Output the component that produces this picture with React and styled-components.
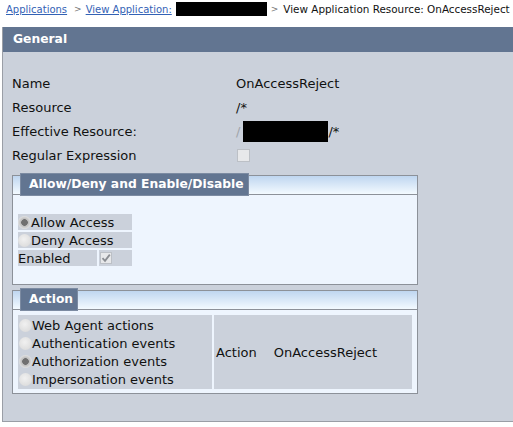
import React from 'react'
import styled, { createGlobalStyle } from 'styled-components'

const GlobalStyle = createGlobalStyle`
  html, body {
    margin: 0;
    padding: 0;
    background: #fff;
    overflow: hidden;
  }

  body {
    font-family: "DejaVu Sans", Verdana, sans-serif;
    color: #111;
  }
`

const Crumbs = styled.div`
  display: flex;
  align-items: center;
  height: 18px;
  padding-left: 6px;
  font-size: 10px;
  white-space: nowrap;
`

const CrumbLink = styled.a`
  flex: none;
  color: #3362b5;
  text-decoration: underline;
`

const CrumbCurrent = styled.span`
  flex: none;
  font-size: 10.4px;
`

const Sep = styled.span`
  flex: none;
  color: #777;
  font-size: 9px;
  margin: 0 ${({ r }) => r}px 0 ${({ l }) => l}px;
`

const Redacted = styled.span`
  display: inline-block;
  flex: none;
  width: ${({ w }) => w}px;
  height: ${({ h }) => h}px;
  background: #000;
  margin-left: ${({ ml }) => ml || 0}px;
`

const Panel = styled.section`
  margin: 9px 0 0 2px;
  border-left: 1px solid #9a9ea6;
  border-bottom: 1px solid #9a9ea6;
  background: #cbd1db;
  padding-bottom: 27px;
`

const PanelHeader = styled.h2`
  margin: 0;
  height: 25px;
  line-height: 25px;
  padding-left: 10px;
  background: #627591;
  color: #fff;
  font-size: 12.3px;
  font-weight: bold;
`

const Fields = styled.div`
  padding: 19px 0 0 9px;
`

const FieldRow = styled.div`
  display: grid;
  grid-template-columns: 224px 1fr;
  align-items: center;
  height: 24px;
  font-size: 13px;
`

const Muted = styled.span`
  color: #a0a4aa;
`

const Value = styled.span`
  display: flex;
  align-items: center;
`

const Check = styled.span`
  display: inline-flex;
  align-items: center;
  justify-content: center;
  box-sizing: border-box;
  width: ${({ size }) => size}px;
  height: ${({ size }) => size}px;
  background: #e7e8ea;
  border: 1px solid #bcc0c6;
  margin-left: ${({ ml }) => ml || 0}px;
`

const Group = styled.div`
  margin: ${({ top }) => top}px 0 0 9px;
  width: 406px;
  box-sizing: border-box;
  border: 1px solid #8c9199;
  background: #eef5fe;
`

const Strip = styled.div`
  display: flex;
  align-items: flex-start;
  height: 18px;
  border-bottom: 1px solid #8c9199;
  background: linear-gradient(#bfd6f0, #f3faff);
`

const Legend = styled.div`
  position: relative;
  margin: -3px 0 0 7px;
  height: 23px;
  line-height: 21px;
  padding: 0 4px 0 8px;
  box-sizing: border-box;
  background: #627591;
  border: 1px solid #7c8ba2;
  color: #fff;
  font-size: 12.3px;
  font-weight: bold;
  white-space: nowrap;
`

const GroupBody = styled.div`
  padding: ${({ pad }) => pad};
`

const OptionGrid = styled.div`
  display: grid;
  grid-template-columns: 79px 33px;
  gap: 2px;
  font-size: 13px;
`

const Cell = styled.div`
  grid-column: ${({ span }) => (span ? '1 / 3' : 'auto')};
  display: flex;
  align-items: center;
  height: 16px;
  background: #cbd1db;
  white-space: nowrap;
`

const RadioDot = styled.span`
  display: inline-block;
  flex: none;
  width: 13px;
  height: 13px;
  border-radius: 50%;
  background: ${({ on }) =>
    on
      ? 'radial-gradient(circle, #707070 0 3px, #bdbdbd 3.6px, #e2e2e2 6.5px)'
      : 'radial-gradient(circle at 45% 40%, #f1f1f1, #dedede 70%, #d4d4d4)'};
`

const ActionTable = styled.div`
  display: grid;
  grid-template-columns: 194px 198px;
  gap: 2px;
  font-size: 13px;
`

const ActionCell = styled.div`
  background: #cbd1db;
  height: 74px;
  box-sizing: border-box;
`

const RadioList = styled.div`
  display: flex;
  flex-direction: column;
  padding-top: 1px;
`

const RadioRow = styled.label`
  display: flex;
  align-items: center;
  height: 18px;
  padding-left: 1px;
  white-space: nowrap;
`

const ActionValue = styled.div`
  display: flex;
  align-items: center;
  gap: 17px;
  height: 100%;
  padding-left: 2px;
`

const CheckMark = () => (
  <svg width="10" height="10" viewBox="0 0 10 10">
    <path d="M1.5 5.2 L4 7.8 L8.8 1.6" fill="none" stroke="#8a8d92" strokeWidth="1.8" />
  </svg>
)

const Radio = ({ on, children }) => (
  <RadioRow>
    <RadioDot on={on} />
    {children}
  </RadioRow>
)

export default function App() {
  return (
    <>
      <GlobalStyle />
      <Crumbs>
        <CrumbLink>Applications</CrumbLink>
        <Sep l={7} r={4}>&gt;</Sep>
        <CrumbLink>View Application:</CrumbLink>
        <Redacted w={91} h={14} ml={4} />
        <Sep l={4} r={5}>&gt;</Sep>
        <CrumbCurrent>View Application Resource: OnAccessReject</CrumbCurrent>
      </Crumbs>

      <Panel>
        <PanelHeader>General</PanelHeader>
        <Fields>
          <FieldRow>
            <span>Name</span>
            <span>OnAccessReject</span>
          </FieldRow>
          <FieldRow>
            <span>Resource</span>
            <span>/*</span>
          </FieldRow>
          <FieldRow>
            <span>Effective Resource:</span>
            <Value>
              <Muted>/</Muted>
              <Redacted w={85} h={21} ml={3} />
              <span>/*</span>
            </Value>
          </FieldRow>
          <FieldRow>
            <span>Regular Expression</span>
            <Value>
              <Check size={13} ml={1} />
            </Value>
          </FieldRow>
        </Fields>

        <Group top={8}>
          <Strip>
            <Legend>Allow/Deny and Enable/Disable</Legend>
          </Strip>
          <GroupBody pad="19px 0 18px 5px">
            <OptionGrid>
              <Cell span>
                <RadioDot on />
                Allow Access
              </Cell>
              <Cell span>
                <RadioDot />
                Deny Access
              </Cell>
              <Cell>Enabled</Cell>
              <Cell>
                <Check size={12} ml={1}>
                  <CheckMark />
                </Check>
              </Cell>
            </OptionGrid>
          </GroupBody>
        </Group>

        <Group top={5}>
          <Strip>
            <Legend>Action</Legend>
          </Strip>
          <GroupBody pad="5px 4px 4px 5px">
            <ActionTable>
              <ActionCell>
                <RadioList>
                  <Radio>Web Agent actions</Radio>
                  <Radio>Authentication events</Radio>
                  <Radio on>Authorization events</Radio>
                  <Radio>Impersonation events</Radio>
                </RadioList>
              </ActionCell>
              <ActionCell>
                <ActionValue>
                  <span>Action</span>
                  <span>OnAccessReject</span>
                </ActionValue>
              </ActionCell>
            </ActionTable>
          </GroupBody>
        </Group>
      </Panel>
    </>
  )
}
